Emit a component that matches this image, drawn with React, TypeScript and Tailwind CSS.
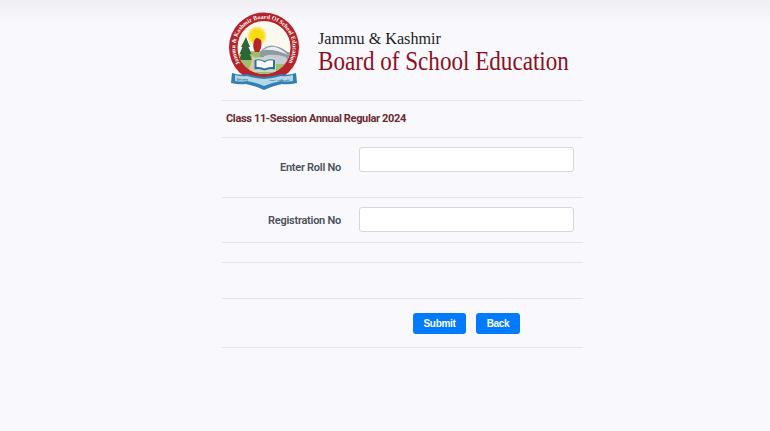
const Logo = () => (
  <svg viewBox="0 0 72 82" className="w-[72px] h-[82px] shrink-0">
    <defs>
      <path id="ring" d="M 12.2 53.5 A 28.7 28.7 0 1 1 59.8 53.5" />
      <clipPath id="inner">
        <circle cx="36" cy="37.5" r="26.5" />
      </clipPath>
      <radialGradient id="sun">
        <stop offset="0.6" stopColor="#f8dc12" />
        <stop offset="1" stopColor="#fbee8a" />
      </radialGradient>
    </defs>
    <circle cx="36" cy="37.5" r="35" fill="#b5242b" />
    <circle cx="36" cy="37.5" r="26.5" fill="#fbf9f0" />
    <g clipPath="url(#inner)">
      <circle cx="29" cy="26" r="9.5" fill="url(#sun)" />
      <path d="M10 45 q14 -6 30 -3 l24 0 v24 h-54z" fill="#9dbf6c" />
      <path d="M32 42 q7 -8 15 -6 q8 1 17 10 v8 h-32z" fill="#8f9aa3" />
      <path d="M35 40 q6 -4 12 -3 q7 2 13 8 q-12 -6 -25 -5z" fill="#eef1f4" />
      <path d="M36 46 q10 -3 22 1 l3 7 h-25z" fill="#c6ccd0" />
      <path d="M18 27 l4 10 h-1.5 l3 7 h-2 l2.5 6 h-13 l2.5 -6 h-2 l3 -7 h-1.5z" fill="#2c6636" />
      <path d="M28.5 28 q5 .5 5 5 q0 6 -2.5 9 h-4 q-2.5 -4 -1.5 -9 q.5 -4 3 -5z" fill="#b5242b" />
      <path d="M24 46 q7 3 7 8 l-4 8 h-8 q5 -7 5 -16z" fill="#dcc79c" />
      <path d="M26 48 q10 -2 22 0 v14 h-22z" fill="#cdd8c4" />
      <path d="M26.5 50 q5 -2 10 1 q5 -3 10.5 -1 v9.5 q-5.5 -1.5 -10.5 1 q-5 -2.5 -10 -1z" fill="#2a6fa6" />
      <path d="M28.5 50.5 q4.5 -1 8 2 q3.5 -3 8.5 -2 v6.5 q-5 -.5 -8.5 1.5 q-3.5 -2 -8 -1.5z" fill="#f6f8fa" />
    </g>
    <text fontFamily="'Liberation Serif', serif" fontSize="6" fontWeight="700" fill="#fff">
      <textPath href="#ring">Jammu &amp; Kashmir Board Of School Education</textPath>
    </text>
    <path d="M4 63 q8 3 15 1 q9 2.5 17 3 q9 -.5 17 -3 q7 2 15 -1 l1 10 q-8 2 -15 1 q-8 1.500 -18 6 q-10 -4.500 -18 -6 q-7 1 -15 -1z" fill="#2f80b5" />
    <path d="M7 65 q7 2 12 1 q9 2.500 17 3 q9 -.5 17 -3 q5 1 12 -1 v6 q-6 1 -12 0 q-9 1.500 -17 5 q-8 -3.500 -17 -5 q-6 1 -12 0z" fill="#b4d8e6" />
    <text x="8.500" y="70.500" fontFamily="'Noto Sans', sans-serif" fontSize="3.4" fill="#1f4f70">ज्ञानं परमं</text>
    <text x="41" y="70.500" fontFamily="'Noto Sans', sans-serif" fontSize="3.4" fill="#1f4f70">علم طاقت است</text>
  </svg>
);

const Row = ({ label, className }: { label: string; className: string }) => (
  <div className={`flex border-b border-[#e3e3ea] ${className}`}>
    <label className="w-[119px] text-right text-[11px] font-semibold tracking-[-0.25px] text-[#4b5259] [font-family:Roboto,sans-serif]">
      {label}
    </label>
    <input
      type="text"
      className="ml-[18px] w-[215px] h-[25px] bg-white border border-[#d3d7de] rounded-[3px]"
    />
  </div>
);

export default function App() {
  return (
    <div className="h-[431px] overflow-hidden bg-gradient-to-b from-[#efeff3] to-[#f8f8fd] to-[5%] [font-family:'Liberation_Sans',sans-serif]">
      <div className="ml-[222px] w-[361px]">
        <header className="flex items-start h-[101px] pl-[6px] pt-[10px] border-b border-[#e3e3ea]">
          <Logo />
          <div className="ml-[18px] mt-[19px] [font-family:'Liberation_Serif',serif]">
            <div className="text-[17px] leading-[20px] text-[#1d1d1f] origin-left scale-x-[0.95] whitespace-nowrap">Jammu &amp; Kashmir</div>
            <div className="text-[27.5px] leading-[24px] text-[#8c0f1c] origin-left scale-x-[0.84] whitespace-nowrap">Board of School Education</div>
          </div>
        </header>
        <div className="h-[37px] flex items-center pl-[4px] border-b border-[#e3e3ea] text-[11px] font-bold tracking-[-0.35px] text-[#6b2b30] [font-family:Roboto,sans-serif]">
          Class 11-Session Annual Regular 2024
        </div>
        <Row label="Enter Roll No" className="h-[60px] pt-[9px] items-start [&>label]:mt-[13px]" />
        <Row label="Registration No" className="h-[45px] pt-[9px] items-start [&>label]:mt-[6px]" />
        <div className="h-[20px] border-b border-[#e3e3ea]" />
        <div className="h-[36px] border-b border-[#e3e3ea]" />
        <div className="h-[49px] flex items-start pt-[14px] pl-[191px] gap-[10px] border-b border-[#e3e3ea]">
          <button className="w-[53px] h-[21px] rounded-[3px] bg-[#007bff] text-white text-[10px] font-bold tracking-[-0.3px]">Submit</button>
          <button className="w-[44px] h-[21px] rounded-[3px] bg-[#007bff] text-white text-[10px] font-bold tracking-[-0.3px]">Back</button>
        </div>
      </div>
    </div>
  );
}
